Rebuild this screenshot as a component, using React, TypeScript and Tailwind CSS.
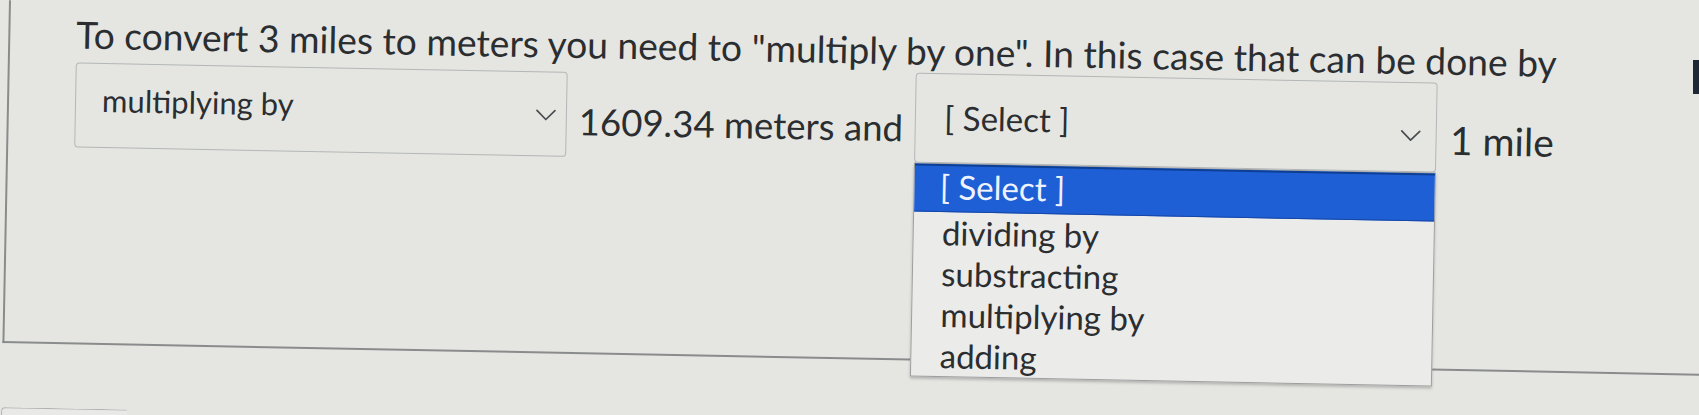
import React from "react";

const options = ["[ Select ]", "dividing by", "substracting", "multiplying by", "adding"];

const sentence =
  'To convert 3 miles to meters you need to "multiply by one". In this case that can be done by';

function Chevron({ className = "" }: { className?: string }) {
  return (
    <svg
      viewBox="0 0 22 13"
      className={`h-[13px] w-[22px] shrink-0 ${className}`}
      fill="none"
      stroke="#4a4d50"
      strokeWidth="1.7"
      strokeLinecap="round"
      strokeLinejoin="round"
    >
      <polyline points="2,2 11,11 20,2" />
    </svg>
  );
}

export default function App() {
  const words = sentence.split(" ");

  return (
    <div className="relative h-[415px] w-full overflow-hidden bg-[#e5e6e2] text-[#2b2e31] [font-family:Lato,'Liberation_Sans',sans-serif]">
      <div className="origin-top-left rotate-[1.1deg] pl-[9px]">
        {/* question box */}
        <div className="h-[343px] w-[1760px] border-b-2 border-l-2 border-[#8a8c8c] pl-[66px] pt-[11px]">
          <p className="text-[37.2px] leading-[1.2]">
            {words.map((w, i) => (
              <React.Fragment key={i}>
                <span>{w}</span>
                {i < words.length - 1 && " "}
              </React.Fragment>
            ))}
          </p>

          <div className="mt-[5px] flex items-start">
            {/* first select */}
            <div className="flex h-[85px] w-[492px] items-start justify-between rounded-[4px] border border-[#b3b7b7] pl-[26px] pr-[9px] pt-[18px]">
              <span className="text-[31px] leading-[1.2]">multiplying by</span>
              <Chevron className="mt-[18px]" />
            </div>

            <span className="ml-[12px] mt-[28px] text-[36.6px] leading-[1.2]">1609.34 meters and</span>

            {/* second select, open */}
            <div className="relative -mt-[6px] ml-[12px]">
              <div className="flex h-[90px] w-[522px] items-start justify-between rounded-[4px] border border-[#b3b7b7] pl-[28px] pr-[14px] pt-[24px]">
                <span className="text-[33px] leading-[1.2]">[ Select ]</span>
                <Chevron className="mt-[22px]" />
              </div>

              <ul className="absolute left-0 top-full z-10 w-[522px] border border-[#9d9f9f] bg-[#ebebe9] text-[33px] leading-[41px] shadow-[0_2px_3px_rgba(0,0,0,0.22)]">
                {options.map((o, i) => (
                  <li
                    key={o}
                    className={
                      i === 0
                        ? "h-[48px] border-b border-t-2 border-b-[#1646a6] border-t-[#0d3f94] bg-[#1f5fd6] pl-[25px] leading-[40px] text-[#eef3ff]"
                        : "pl-[28px]"
                    }
                  >
                    {o}
                  </li>
                ))}
              </ul>
            </div>

            <span className="ml-[13px] mt-[28px] text-[39px] leading-[1.2]">1 mile</span>
          </div>
        </div>

        {/* next box peeking at the bottom */}
        <div className="mt-[64px] h-[20px] w-[126px] rounded-tl-[4px] border-l border-t border-[#b0b3b3] bg-[#e9eae7]" />
      </div>

      {/* dark edge on the right */}
      <div className="absolute right-0 top-[60px] h-[34px] w-[6px] bg-[#1d2736]" />
    </div>
  );
}
